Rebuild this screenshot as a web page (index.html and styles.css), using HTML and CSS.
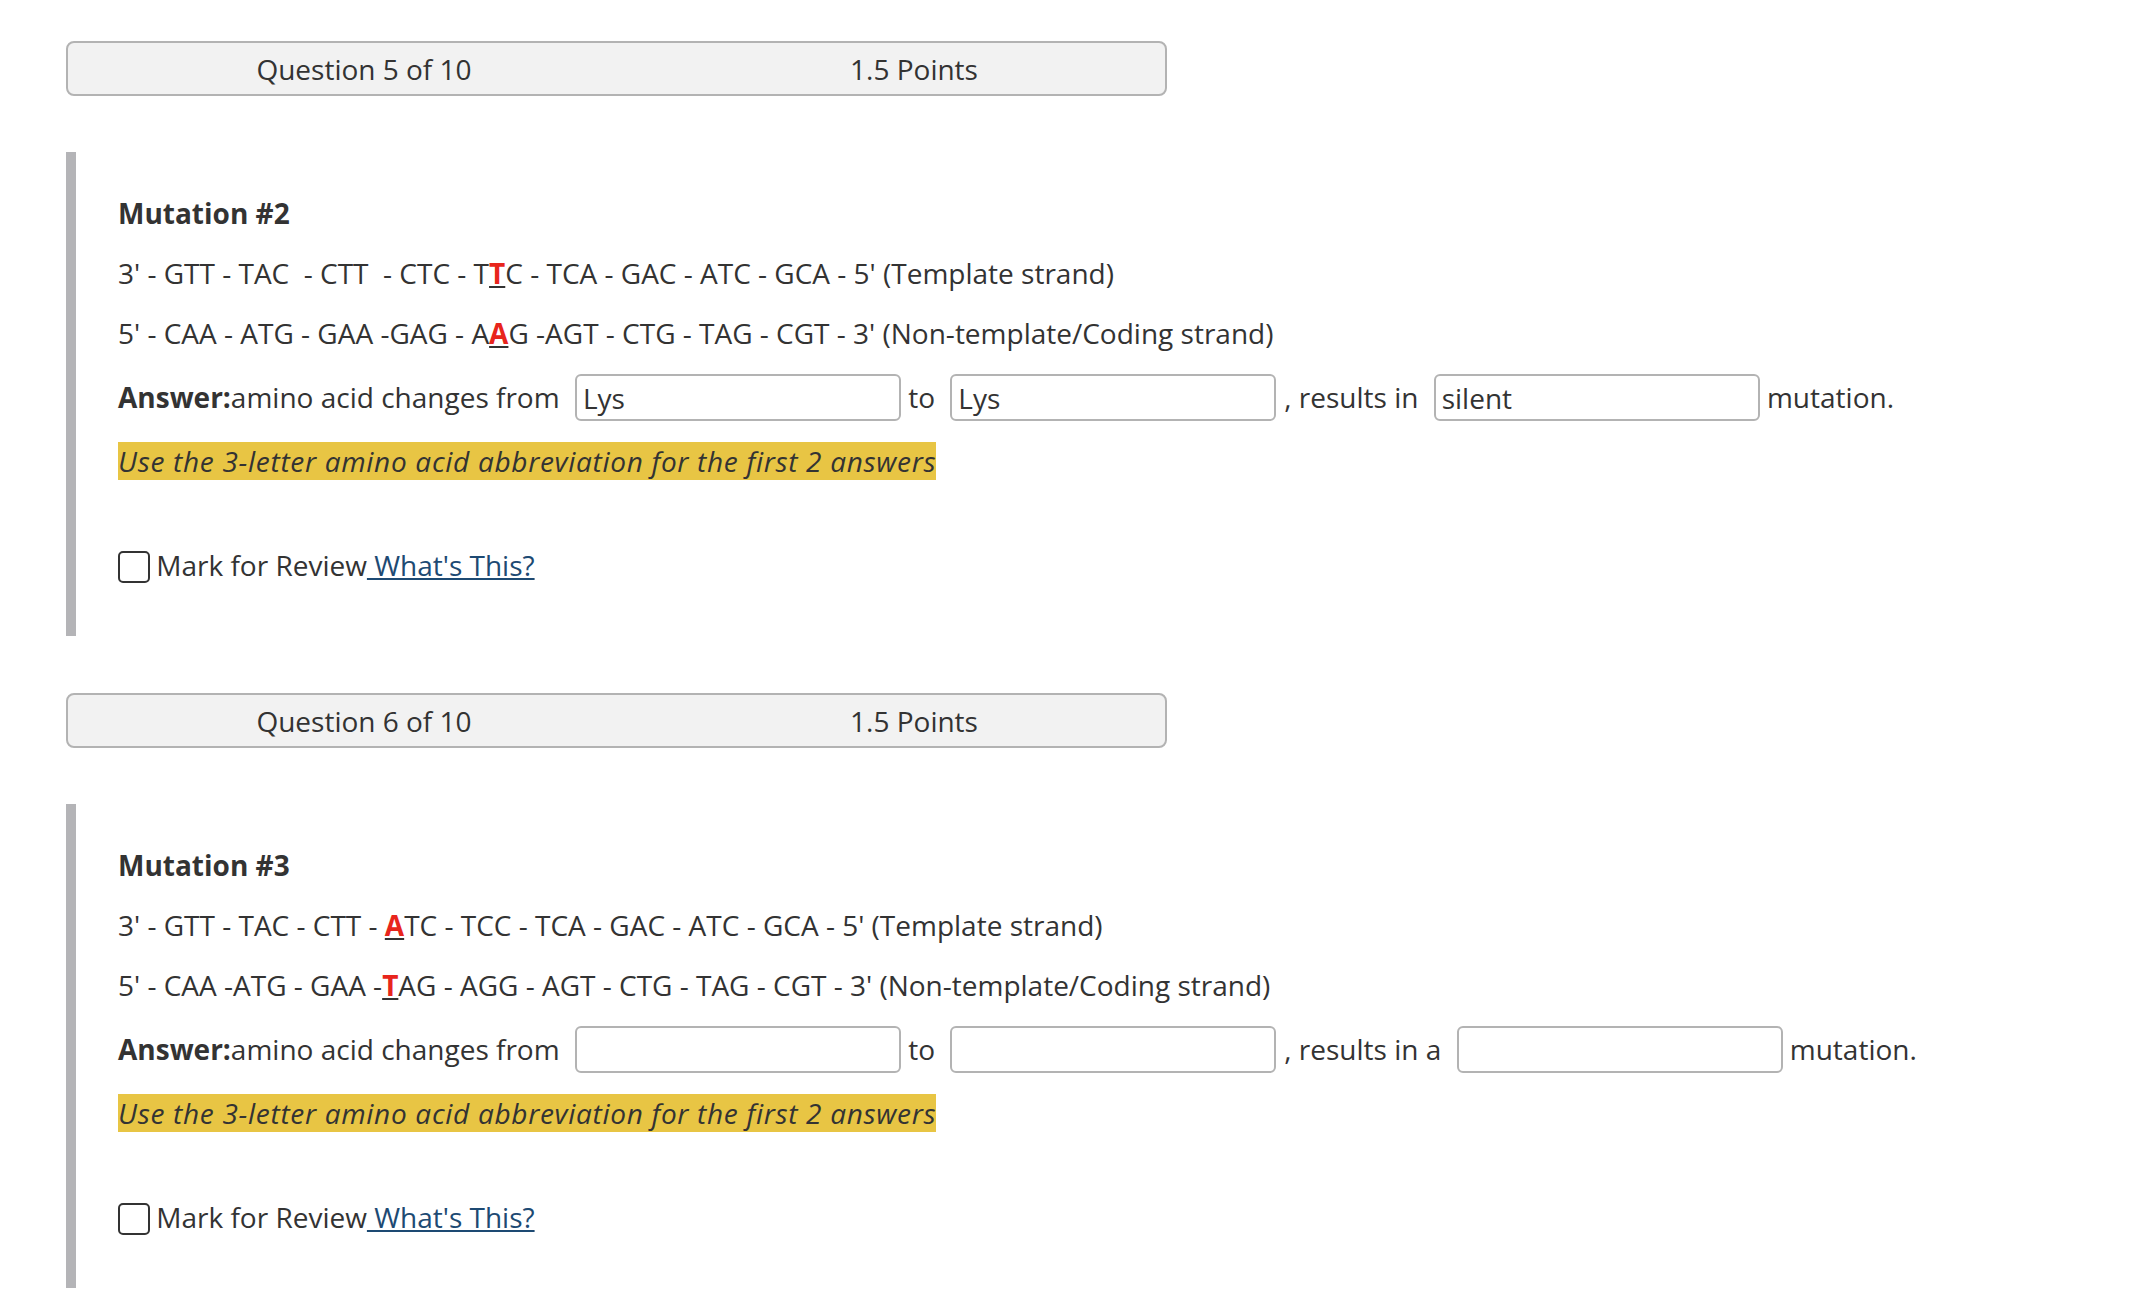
FILE: index.html
```html
<!DOCTYPE html>
<html lang="en">
<head>
    <meta charset="UTF-8">
    <title>Quiz - Mutations</title>
    <link rel="stylesheet" href="styles.css">
</head>
<body>
    <div class="quiz">
        <div class="question-header">
            <span class="q-number">Question 5 of 10</span>
            <span class="q-points">1.5 Points</span>
        </div>
        <div class="question-body">
            <p class="title">Mutation #2</p>
            <p>3' - GTT - TAC&nbsp; - CTT&nbsp; - CTC - T<u><b class="mut">T</b></u>C - TCA - GAC - ATC - GCA - 5' (Template strand)</p>
            <p>5' - CAA - ATG - GAA -GAG - A<u><b class="mut">A</b></u>G -AGT - CTG - TAG - CGT - 3' (Non-template/Coding strand)</p>
            <p class="answer"><b>Answer:</b>amino acid changes from <input type="text" value="Lys"> to <input type="text" class="comma" value="Lys">, results in <input type="text" value="silent"> mutation.</p>
            <p class="hint"><span>Use the 3-letter amino acid abbreviation for the first 2 answers</span></p>
            <p class="review"><input type="checkbox" class="check"> Mark for Review<a href="#"> What's This?</a></p>
        </div>

        <div class="question-header">
            <span class="q-number">Question 6 of 10</span>
            <span class="q-points">1.5 Points</span>
        </div>
        <div class="question-body">
            <p class="title">Mutation #3</p>
            <p>3' - GTT - TAC - CTT - <u><b class="mut">A</b></u>TC - TCC - TCA - GAC - ATC - GCA - 5' (Template strand)</p>
            <p>5' - CAA -ATG - GAA -<u><b class="mut">T</b></u>AG - AGG - AGT - CTG - TAG - CGT - 3' (Non-template/Coding strand)</p>
            <p class="answer"><b>Answer:</b>amino acid changes from <input type="text"> to <input type="text" class="comma">, results in a <input type="text"> mutation.</p>
            <p class="hint"><span>Use the 3-letter amino acid abbreviation for the first 2 answers</span></p>
            <p class="review"><input type="checkbox" class="check"> Mark for Review<a href="#"> What's This?</a></p>
        </div>
    </div>
</body>
</html>
```

FILE: styles.css
```css
body {
    margin: 0;
    background: #fff;
    font-family: "Open Sans", sans-serif;
    font-size: 28px;
    color: #333;
}

.quiz {
    padding: 41px 0 0 66px;
}

.question-header {
    width: 1101px;
    height: 55px;
    box-sizing: border-box;
    display: grid;
    grid-template-columns: 571px 1fr;
    align-items: center;
    background-color: #f2f2f2;
    border: 2px solid #b3b3b3;
    border-radius: 8px;
    margin-bottom: 56px;
}

.q-number {
    text-align: center;
    padding-left: 21px;
}

.q-points {
    text-align: center;
    padding-left: 24px;
}

.question-body {
    border-left: 10px solid #b4b4b7;
    padding: 40px 0 50px 42px;
    margin-bottom: 57px;
}

.question-body p {
    margin: 0 0 18px;
    line-height: 42px;
    white-space: nowrap;
}

.title {
    font-weight: bold;
}

.mut {
    color: #e8251c;
}

u {
    text-decoration-color: #333;
}

.question-body p.answer {
    height: 47px;
    line-height: 47px;
    margin: 20px 0 19px;
}

.answer input {
    width: 326px;
    height: 47px;
    box-sizing: border-box;
    margin: 0 0 0 8px;
    padding: 0 6px;
    border: 2px solid #b3b3b3;
    border-radius: 6px;
    font-family: "Open Sans", sans-serif;
    font-size: 28px;
    color: #333;
    vertical-align: top;
    background: #fff;
}

.answer input.comma {
    margin-right: 8px;
}

.question-body p.hint {
    margin-bottom: 62px;
}

.hint span {
    background-color: #e8c544;
    font-style: italic;
    letter-spacing: 0.7px;
}

.question-body p.review {
    margin-bottom: 0;
}

.check {
    appearance: none;
    width: 32px;
    height: 32px;
    box-sizing: border-box;
    margin: 0 -1px 0 0;
    border: 2px solid #333;
    border-radius: 5px;
    vertical-align: -7px;
    background: #fff;
}

.review a {
    color: #1d4a73;
    text-decoration: underline;
}
```
